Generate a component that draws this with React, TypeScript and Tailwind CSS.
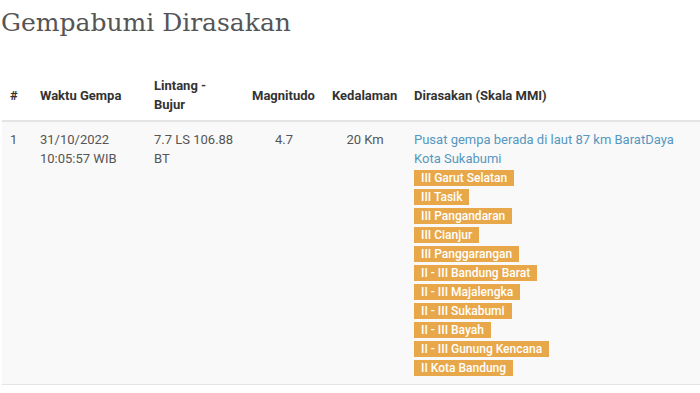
const labels = [
  'III Garut Selatan',
  'III Tasik',
  'III Pangandaran',
  'III Cianjur',
  'III Panggarangan',
  'II - III Bandung Barat',
  'II - III Majalengka',
  'II - III Sukabumi',
  'II - III Bayah',
  'II - III Gunung Kencana',
  'II Kota Bandung',
];

export default function App() {
  return (
    <div className="h-[393px] w-[700px] overflow-hidden bg-white font-['Roboto',sans-serif] text-[13px] leading-[19px] text-[#555]">
      <h1 className="h-[70px] pl-[1px] pt-[6px] font-['DejaVu_Serif',serif] text-[25px] font-normal leading-[34px] text-[#555]">
        Gempabumi Dirasakan
      </h1>
      <table className="ml-[2px] w-[710px] table-fixed border-collapse">
        <thead>
          <tr className="border-b-2 border-[#e4e4e4] text-left font-bold text-[#333]">
            <th className="w-[30px] px-2 py-[6px] align-middle">#</th>
            <th className="w-[114px] px-2 py-[6px] align-middle">Waktu Gempa</th>
            <th className="w-[98px] px-2 py-[6px] align-middle">Lintang - Bujur</th>
            <th className="w-[80px] px-2 py-[6px] align-middle">Magnitudo</th>
            <th className="w-[82px] px-2 py-[6px] align-middle">Kedalaman</th>
            <th className="px-2 py-[6px] align-middle">Dirasakan (Skala MMI)</th>
          </tr>
        </thead>
        <tbody>
          <tr className="border-b border-[#e4e4e4] bg-[#f9f9f9] align-top">
            <td className="p-2">1</td>
            <td className="p-2">
              31/10/2022
              <br />
              10:05:57 WIB
            </td>
            <td className="p-2">7.7 LS 106.88 BT</td>
            <td className="p-2 text-center">4.7</td>
            <td className="p-2 text-center">20 Km</td>
            <td className="p-2 pr-[20px]">
              <a className="text-[#5597c0]">
                Pusat gempa berada di laut 87 km BaratDaya Kota Sukabumi
              </a>
              <div className="mt-[2px] flex flex-col items-start gap-[3px]">
                {labels.map((l) => (
                  <span
                    key={l}
                    className="h-[16px] bg-[#e8a84a] px-[7px] text-[12px] font-medium leading-[16px] text-white"
                  >
                    {l}
                  </span>
                ))}
              </div>
            </td>
          </tr>
        </tbody>
      </table>
    </div>
  );
}
